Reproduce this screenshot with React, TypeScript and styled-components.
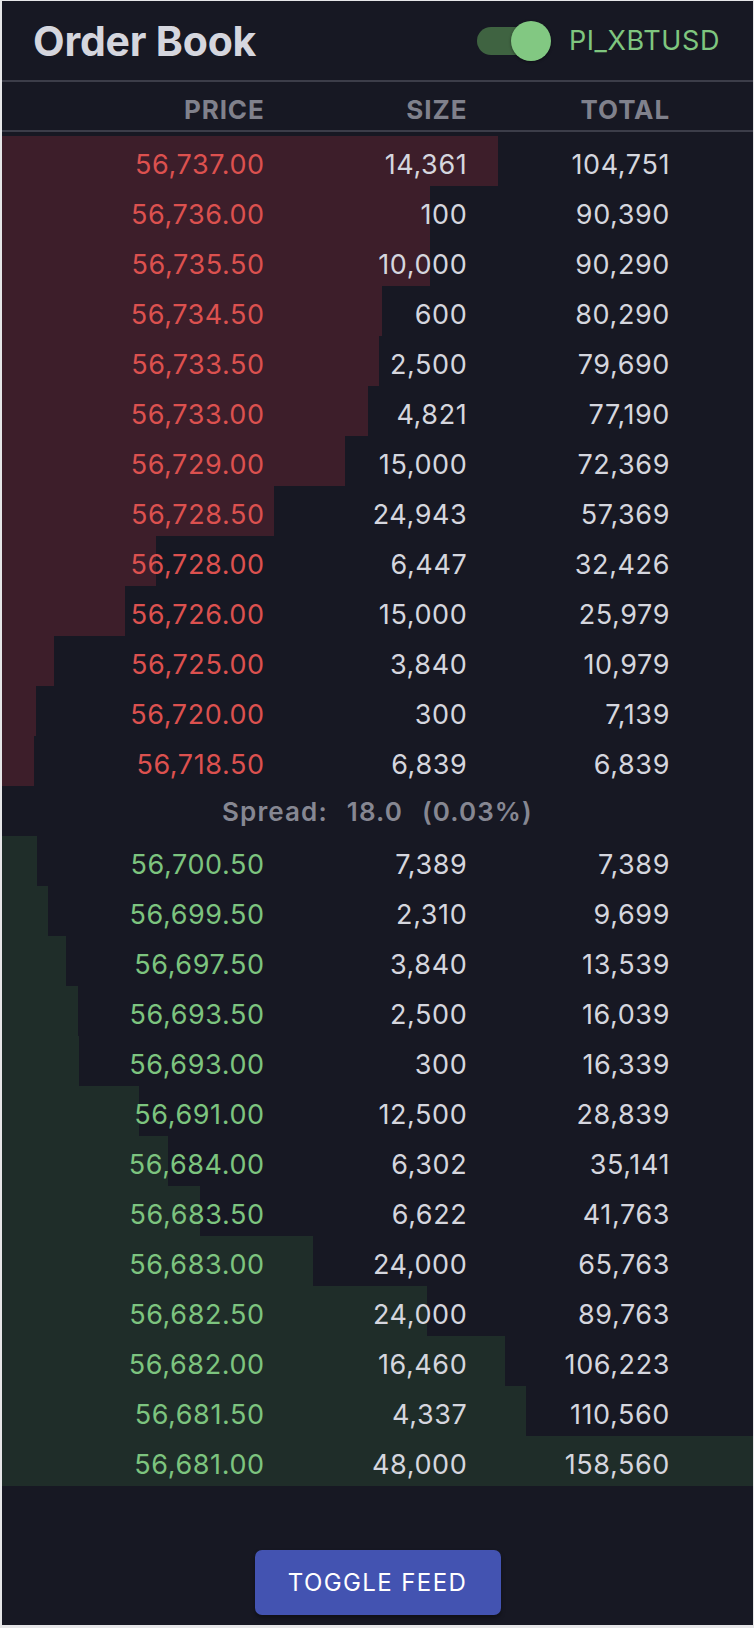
import styled, { createGlobalStyle } from 'styled-components';

const GlobalStyle = createGlobalStyle`
  html, body {
    margin: 0;
    padding: 0;
    background: #e6e6e8;
  }
  body {
    font-family: 'Inter', 'Liberation Sans', sans-serif;
  }
`;

const Page = styled.div`
  margin: 1px 1px 3px 2px;
  height: 1624px;
  background: #171823;
  display: flex;
  flex-direction: column;
  overflow: hidden;
`;

const Header = styled.header`
  height: 79px;
  display: flex;
  align-items: center;
  justify-content: space-between;
  padding: 0 33px 0 31px;
  border-bottom: 2px solid #3c3d49;
`;

const Title = styled.h1`
  margin: 0;
  font-size: 41px;
  font-weight: 700;
  color: #d5d6de;
  letter-spacing: -0.2px;
`;

const FeedGroup = styled.div`
  display: flex;
  align-items: center;
  gap: 18px;
`;

const Switch = styled.div`
  position: relative;
  width: 74px;
  height: 40px;
`;

const Track = styled.div`
  position: absolute;
  left: 0;
  top: 6px;
  width: 66px;
  height: 28px;
  border-radius: 14px;
  background: #3f6341;
`;

const Knob = styled.div`
  position: absolute;
  right: 0;
  top: 0;
  width: 40px;
  height: 40px;
  border-radius: 50%;
  background: #82c882;
  box-shadow: 0 1px 3px rgba(0, 0, 0, 0.4);
`;

const FeedName = styled.span`
  font-size: 27px;
  letter-spacing: 0.6px;
  color: #7fc67f;
`;

const Grid = styled.div`
  display: grid;
  grid-template-columns: repeat(3, 1fr);
  padding: 6px 83px 0 60px;
  text-align: right;
  box-sizing: border-box;
`;

const Headings = styled(Grid)`
  height: 50px;
  align-items: center;
  border-bottom: 2px solid #3c3d49;
  font-size: 26px;
  font-weight: 700;
  color: #80818c;
  letter-spacing: 0.9px;
`;

const Book = styled.div`
  margin-top: 4px;
  display: flex;
  flex-direction: column;
`;

const Row = styled(Grid)`
  position: relative;
  height: 50px;
  align-items: center;
  font-size: 27px;
  letter-spacing: 0.6px;
  color: #d5d6de;
`;

const Bar = styled.div<{ $side: 'ask' | 'bid' }>`
  position: absolute;
  left: 0;
  top: 0;
  bottom: 0;
  background: ${(p) => (p.$side === 'ask' ? '#3d1e2a' : '#1f2d29')};
`;

const Cell = styled.span<{ $tone?: 'ask' | 'bid' }>`
  position: relative;
  color: ${(p) =>
    p.$tone === 'ask' ? '#dc514f' : p.$tone === 'bid' ? '#7dc47f' : '#d5d6de'};
`;

const Spread = styled.div`
  height: 50px;
  display: flex;
  align-items: center;
  justify-content: center;
  gap: 19px;
  font-size: 26px;
  font-weight: 600;
  letter-spacing: 1.1px;
  color: #868792;
`;

const Footer = styled.div`
  flex: 1;
  display: flex;
  align-items: flex-start;
  justify-content: center;
  padding-top: 64px;
`;

const ToggleButton = styled.button`
  width: 246px;
  height: 65px;
  border: none;
  border-radius: 7px;
  background: #4353b1;
  color: #ffffff;
  font-family: inherit;
  font-size: 24px;
  font-weight: 400;
  letter-spacing: 1.4px;
  box-shadow: 0 3px 4px rgba(0, 0, 0, 0.35);
  cursor: pointer;
`;

type Level = [string, string, string];

const asks: Level[] = [
  ['56,737.00', '14,361', '104,751'],
  ['56,736.00', '100', '90,390'],
  ['56,735.50', '10,000', '90,290'],
  ['56,734.50', '600', '80,290'],
  ['56,733.50', '2,500', '79,690'],
  ['56,733.00', '4,821', '77,190'],
  ['56,729.00', '15,000', '72,369'],
  ['56,728.50', '24,943', '57,369'],
  ['56,728.00', '6,447', '32,426'],
  ['56,726.00', '15,000', '25,979'],
  ['56,725.00', '3,840', '10,979'],
  ['56,720.00', '300', '7,139'],
  ['56,718.50', '6,839', '6,839'],
];

const bids: Level[] = [
  ['56,700.50', '7,389', '7,389'],
  ['56,699.50', '2,310', '9,699'],
  ['56,697.50', '3,840', '13,539'],
  ['56,693.50', '2,500', '16,039'],
  ['56,693.00', '300', '16,339'],
  ['56,691.00', '12,500', '28,839'],
  ['56,684.00', '6,302', '35,141'],
  ['56,683.50', '6,622', '41,763'],
  ['56,683.00', '24,000', '65,763'],
  ['56,682.50', '24,000', '89,763'],
  ['56,682.00', '16,460', '106,223'],
  ['56,681.50', '4,337', '110,560'],
  ['56,681.00', '48,000', '158,560'],
];

const toNum = (s: string) => Number(s.replace(/,/g, ''));
const maxTotal = Math.max(...[...asks, ...bids].map((l) => toNum(l[2])));

function LevelRow({ level, side }: { level: Level; side: 'ask' | 'bid' }) {
  const [price, size, total] = level;
  const depth = (toNum(total) / maxTotal) * 100;
  return (
    <Row>
      <Bar $side={side} style={{ width: `${depth}%` }} />
      <Cell $tone={side}>{price}</Cell>
      <Cell>{size}</Cell>
      <Cell>{total}</Cell>
    </Row>
  );
}

function App() {
  return (
    <>
      <GlobalStyle />
      <Page>
        <Header>
          <Title>Order Book</Title>
          <FeedGroup>
            <Switch>
              <Track />
              <Knob />
            </Switch>
            <FeedName>PI_XBTUSD</FeedName>
          </FeedGroup>
        </Header>
        <Headings>
          <span>PRICE</span>
          <span>SIZE</span>
          <span>TOTAL</span>
        </Headings>
        <Book>
          {asks.map((l) => (
            <LevelRow key={l[0]} level={l} side="ask" />
          ))}
          <Spread>
            <span>Spread:</span>
            <span>18.0</span>
            <span>(0.03%)</span>
          </Spread>
          {bids.map((l) => (
            <LevelRow key={l[0]} level={l} side="bid" />
          ))}
        </Book>
        <Footer>
          <ToggleButton>TOGGLE FEED</ToggleButton>
        </Footer>
      </Page>
    </>
  );
}

export default App;
